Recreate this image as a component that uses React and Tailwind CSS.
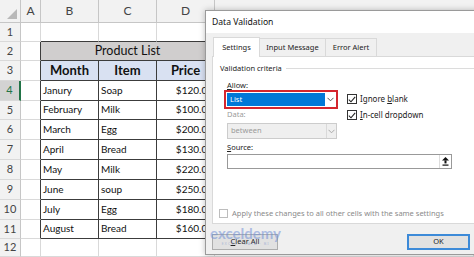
import React from 'react';

// widths of the spreadsheet columns: row numbers, A, B, C, D, rest
const COLS = [21, 20, 58, 58, 58];
const ROW_H = [19, 19, 20, 20, 19, 20, 20, 20, 20, 20, 19, 18];

const DATA = [
  ['Janury', 'Soap', '$120.00'],
  ['February', 'Milk', '$100.00'],
  ['March', 'Egg', '$200.00'],
  ['April', 'Bread', '$130.00'],
  ['May', 'Milk', '$220.00'],
  ['June', 'soup', '$250.00'],
  ['July', 'Egg', '$180.00'],
  ['August', 'Bread', '$160.00'],
];

const grid = 'border-r border-b border-[#d9d9d9]';
const dark = 'border-r border-b border-[#3c3c3c]';

const Chevron = ({ color = '#555' }) => (
  <svg width="7" height="5" viewBox="0 0 7 5">
    <polyline points="0.5,0.8 3.5,3.8 6.5,0.8" fill="none" stroke={color} strokeWidth="1" />
  </svg>
);

const Check = ({ checked }) => (
  <div className="w-[10px] h-[10px] border border-[#333] bg-white flex items-center justify-center">
    {checked && (
      <svg width="8" height="7" viewBox="0 0 8 7">
        <polyline points="0.8,3.6 3,5.8 7.2,0.9" fill="none" stroke="#222" strokeWidth="1.1" />
      </svg>
    )}
  </div>
);

function SheetRow({ n, h }) {
  const active = n === 4;
  const numCls = active
    ? 'bg-[#d3d3d3] text-[#217346] border-r-2 border-r-[#217346]'
    : 'bg-[#f2f2f2] text-[#444]';
  const inTable = n >= 2 && n <= 11;
  const aBorder = inTable ? 'border-r border-r-[#3c3c3c] border-b border-b-[#d9d9d9]' : grid;
  const topOfTable = n === 1;

  let cells;
  if (n === 2) {
    cells = (
      <div className={`w-[174px] shrink-0 bg-[#d0cece] ${dark} flex items-center justify-center text-[12.5px] text-[#111]`}>
        Product List
      </div>
    );
  } else if (n === 3) {
    cells = ['Month', 'Item', 'Price'].map((t) => (
      <div
        key={t}
        className={`w-[58px] shrink-0 bg-[#d9e1f2] ${dark} flex items-center justify-center font-bold text-[13px] text-[#111]`}
      >
        {t}
      </div>
    ));
  } else if (n >= 4 && n <= 11) {
    const r = DATA[n - 4];
    cells = r.map((t, i) => (
      <div
        key={i}
        className={`w-[58px] shrink-0 ${dark} flex items-end pb-[2px] ${i === 2 ? 'justify-end pr-[1px]' : 'pl-[2px]'} text-[10px] text-[#111]`}
      >
        {t}
      </div>
    ));
  } else {
    cells = COLS.slice(2).map((w, i) => (
      <div
        key={i}
        style={{ width: w }}
        className={`shrink-0 ${topOfTable ? 'border-r border-r-[#d9d9d9] border-b border-b-[#3c3c3c]' : grid}`}
      />
    ));
  }

  return (
    <div className="flex" style={{ height: h }}>
      <div className={`w-[21px] shrink-0 ${numCls} border-b border-b-[#d9d9d9] ${active ? '' : 'border-r border-r-[#c6c6c6]'} flex items-center justify-center text-[11px]`}>
        {n}
      </div>
      <div className={`w-[20px] shrink-0 ${aBorder}`} />
      {cells}
      <div className={`flex-1 ${grid}`} />
    </div>
  );
}

function Sheet() {
  return (
    <div className="w-full h-full bg-white" style={{ fontFamily: 'Lato, "Liberation Sans", sans-serif' }}>
      {/* column header */}
      <div className="flex h-[23px] bg-[#f2f2f2] text-[#444] text-[12px]">
        <div className="w-[21px] shrink-0 border-r border-b border-[#c6c6c6] flex items-end justify-end p-[3px]">
          <svg width="10" height="10" viewBox="0 0 10 10">
            <polygon points="10,0 10,10 0,10" fill="#b9b9b9" />
          </svg>
        </div>
        {['A', 'B', 'C', 'D'].map((c, i) => (
          <div
            key={c}
            style={{ width: COLS[i + 1] }}
            className="shrink-0 border-r border-b border-[#c6c6c6] flex items-center justify-center"
          >
            {c}
          </div>
        ))}
        <div className="flex-1 border-b border-[#c6c6c6]" />
      </div>
      {ROW_H.map((h, i) => (
        <SheetRow key={i} n={i + 1} h={h} />
      ))}
    </div>
  );
}

function Dialog() {
  return (
    <div
      className="absolute left-[205px] top-[10px] w-[280px] h-[245px] flex flex-col border-l border-t border-b border-[#9a9a9a] shadow-[0_0_6px_rgba(0,0,0,0.25)] text-[#222] text-[7.5px]"
      style={{ fontFamily: '"Noto Sans", "Open Sans", sans-serif' }}
    >
      <div className="h-[22px] bg-white flex items-center pl-[6px] text-[8.6px] text-[#111]">Data Validation</div>
      <div className="flex-1 bg-[#f0f0f0] px-[6px] relative">
        {/* tabs */}
        <div className="flex items-end h-[23px] pl-[1px]">
          <div className="w-[47px] h-[20px] -mb-px bg-white border border-b-0 border-[#d9d9d9] flex items-center justify-center z-10">
            Settings
          </div>
          <div className="w-[66px] h-[18px] border-t border-r border-[#d9d9d9] flex items-center justify-center">
            Input Message
          </div>
          <div className="w-[51px] h-[18px] border-t border-r border-[#d9d9d9] flex items-center justify-center">
            Error Alert
          </div>
        </div>
        {/* panel */}
        <div className="h-[168px] bg-white border border-[#d9d9d9] flex flex-col">
          <div className="flex items-center h-[13px] mt-[5px] pl-[7px] pr-[4px]">
            <span>Validation criteria</span>
            <div className="flex-1 h-px bg-[#dcdcdc] ml-[4px]" />
          </div>
          <div className="flex pl-[14px] mt-[5px]">
            <div className="flex flex-col w-[111px]">
              <div className="h-[10px] leading-[10px]">
                <span className="underline">A</span>llow:
              </div>
              <div className="-ml-[3px] w-[114px] h-[19px] border-2 border-[#d4262e] p-px">
                <div className="h-[13px] flex bg-white">
                  <div className="flex-1 bg-[#0078d7] text-white flex items-center pl-[3px]">List</div>
                  <div className="w-[10px] flex items-center justify-center">
                    <Chevron />
                  </div>
                </div>
              </div>
              <div className="h-[10px] leading-[10px] text-[#9a9a9a]">Data:</div>
              <div className="mt-[4px] h-[16px] w-[110px] border border-[#cccccc] bg-[#efefef] flex">
                <div className="flex-1 flex items-center pl-[3px] text-[#9a9a9a]">between</div>
                <div className="w-[10px] border-l border-[#d9d9d9] flex items-center justify-center">
                  <Chevron color="#aaa" />
                </div>
              </div>
            </div>
            <div className="flex flex-col ml-[9px] pt-[13px] gap-[4px] text-[8px]">
              <div className="flex items-center gap-[3px]">
                <Check checked />
                <span>
                  Ignore <span className="underline">b</span>lank
                </span>
              </div>
              <div className="flex items-center gap-[3px]">
                <Check checked />
                <span>
                  <span className="underline">I</span>n-cell dropdown
                </span>
              </div>
            </div>
          </div>
          <div className="pl-[14px] mt-[3px] h-[10px] leading-[10px]">
            <span className="underline">S</span>ource:
          </div>
          <div className="ml-[14px] mt-[2px] w-[225px] h-[15px] border border-[#999] bg-white flex justify-end">
            <div className="w-[12px] h-full flex items-center justify-center border-l border-[#ddd]">
              <svg width="7" height="9" viewBox="0 0 7 9">
                <polygon points="3.5,0 7,3.6 0,3.6" fill="#111" />
                <rect x="2.5" y="3.4" width="2" height="3" fill="#111" />
                <rect x="0.5" y="7.5" width="6" height="1.2" fill="#111" />
              </svg>
            </div>
          </div>
          <div className="flex items-center gap-[4px] pl-[6px] mt-[39px] text-[#8a8a8a]">
            <div className="w-[9px] h-[9px] border border-[#bdbdbd] bg-white" />
            <span>Apply these changes to all other cells with the same settings</span>
          </div>
        </div>
        {/* footer */}
        <div className="flex mt-[10px]">
          <div className="w-[66px] h-[16px] bg-[#e1e1e1] border border-[#adadad] flex items-center justify-center">
            <span>
              <span className="underline">C</span>lear All
            </span>
          </div>
          <div className="ml-[129px] w-[63px] h-[16px] bg-[#e1e1e1] border-2 border-[#3c8ad8] flex items-center justify-center">
            OK
          </div>
        </div>
        {/* watermark */}
        <div className="absolute left-[4px] top-[193px] flex flex-col items-center pointer-events-none">
          <span className="text-[15px] font-bold leading-[15px] text-[#6f8fd6]/55" style={{ fontFamily: 'Lato, sans-serif' }}>
            exceldemy
          </span>
          <span className="text-[4px] tracking-[1px] text-[#8aa0d0]/60">EXCEL · DATA · BI</span>
        </div>
      </div>
    </div>
  );
}

export default function App() {
  return (
    <div className="relative w-[474px] h-[257px] overflow-hidden bg-white">
      <Sheet />
      <Dialog />
    </div>
  );
}
